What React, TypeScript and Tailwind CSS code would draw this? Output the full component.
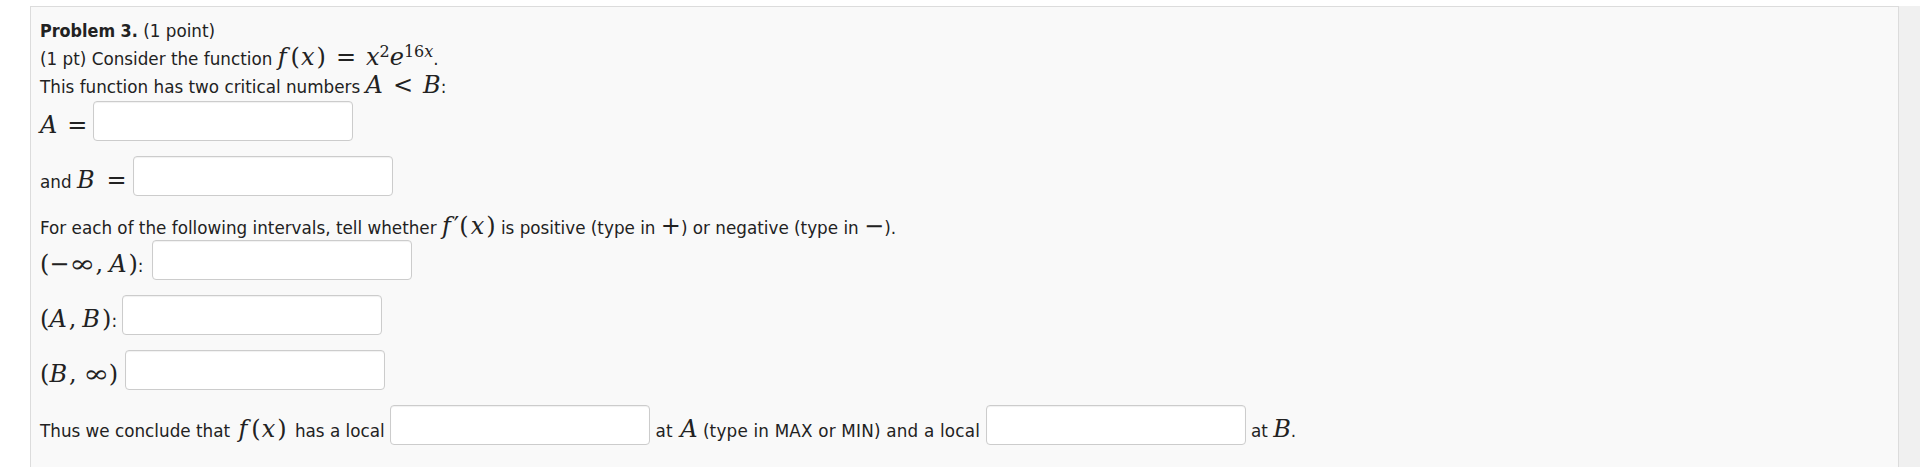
import type { ReactNode } from "react";

function M({ children }: { children: ReactNode }) {
  return (
    <span className="font-['DejaVu_Serif',serif] text-[24px] leading-none text-[#222]">
      {children}
    </span>
  );
}

function V({ children, className = "" }: { children: ReactNode; className?: string }) {
  return <span className={`italic ${className}`}>{children}</span>;
}

function Rel({ children }: { children: ReactNode }) {
  return <span className="mx-[10px]">{children}</span>;
}

function Inf() {
  return <span className="inline-block w-[26px] scale-x-[1.3] text-center">∞</span>;
}

function Answer({ className = "" }: { className?: string }) {
  return (
    <input
      type="text"
      className={`h-[40px] w-[260px] shrink-0 rounded-[4px] border border-[#ccc] bg-white shadow-[inset_0_1px_1px_rgb(0_0_0_/_6%)] ${className}`}
    />
  );
}

function Row({ children, className = "" }: { children: ReactNode; className?: string }) {
  return <div className={`flex h-[40px] items-end ${className}`}>{children}</div>;
}

function Label({ children, className = "" }: { children: ReactNode; className?: string }) {
  return <span className={`whitespace-pre leading-[28px] ${className}`}>{children}</span>;
}

function Fx({ className = "" }: { className?: string }) {
  return (
    <span className={className}>
      <M>
        <V className="mr-[4px]">f</V>
        <span className="mr-[1px]">(</span>
        <V>x</V>
        <span className="ml-[2px]">)</span>
      </M>
    </span>
  );
}

export default function App() {
  return (
    <div className="flex h-[467px] w-[1920px] overflow-hidden bg-white font-['DejaVu_Sans',sans-serif] text-[16.8px] text-[#222]">
      <section className="ml-[30px] mt-[6px] w-[1869px] border-l border-r border-t border-[#dcdcdc] bg-[#f9f9f9] pl-[9px] pt-[10px]">
        <div className="h-[28px] leading-[28px]">
          <b className="font-['DejaVu_Sans_Condensed','Liberation_Sans',sans-serif] text-[17.8px]">Problem 3.</b> (1 point)
        </div>
        <div className="h-[28px] whitespace-pre leading-[28px]">
          (1 pt) Consider the function{" "}
          <M>
            <V className="mr-[4px]">f</V>
            <span className="mr-[1px]">(</span>
            <V>x</V>
            <span className="ml-[2px]">)</span>
            <Rel>=</Rel>
            <V>x</V>
            <sup className="text-[16px]">2</sup>
            <V>e</V>
            <sup className="text-[16px]">
              16<V>x</V>
            </sup>
          </M>
          .
        </div>
        <div className="h-[28px] whitespace-pre leading-[28px]">
          This function has two critical numbers{" "}
          <M>
            <V>A</V>
            <Rel>&lt;</Rel>
            <V>B</V>
          </M>
          :
        </div>

        <Row>
          <Label>
            <M>
              <V>A</V>
              <Rel>=</Rel>
            </M>
          </Label>
          <Answer className="-ml-[4px]" />
        </Row>

        <Row className="mt-[15px]">
          <Label>
            and{" "}
            <M>
              <V className="mr-[2px]">B</V>
              <Rel>=</Rel>
            </M>
          </Label>
          <Answer className="-ml-[4px]" />
        </Row>

        <div className="mt-[18px] h-[25px] whitespace-pre leading-[25px]">
          For each of the following intervals, tell whether{" "}
          <M>
            <V className="mr-[3px]">f</V>
            <span className="mr-[2px]">′(</span>
            <V>x</V>
            <span className="ml-[2px]">)</span>
          </M>{" "}
          is positive (type in <M>+</M>) or negative (type in <M>−</M>).
        </div>

        <Row className="mt-[1px]">
          <Label>
            <M>
              (−<Inf />,<span className="ml-[6px]" />
              <V className="mr-[2px]">A</V>)
            </M>
            :{" "}
          </Label>
          <Answer className="ml-[3px]" />
        </Row>

        <Row className="mt-[15px]">
          <Label>
            <M>
              (<V className="mr-[2px]">A</V>,<span className="ml-[6px]" />
              <V className="mr-[2px]">B</V>)
            </M>
            :{" "}
          </Label>
          <Answer />
        </Row>

        <Row className="mt-[15px]">
          <Label>
            <M>
              (<V className="mr-[2px]">B</V>,<span className="ml-[6px]" />
              <Inf />)
            </M>{" "}
          </Label>
          <Answer className="ml-[2px]" />
        </Row>

        <Row className="mt-[15px]">
          <Label>
            Thus we conclude that <Fx className="mx-[3px]" /> has a local{" "}
          </Label>
          <Answer />
          <Label className="tracking-[0.2px]">
            {" "}at{" "}
            <M>
              <V className="ml-[2px] mr-[5px]">A</V>
            </M>
            (type in MAX or MIN) and a local{" "}
          </Label>
          <Answer />
          <Label>
            {" "}at{" "}
            <M>
              <V>B</V>
            </M>
            .
          </Label>
        </Row>
      </section>
      <div className="mt-[6px] flex-1 bg-[#f0f0f0]" />
    </div>
  );
}
